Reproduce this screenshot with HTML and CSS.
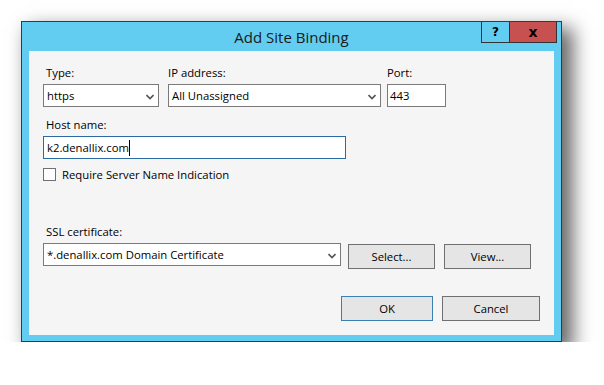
FILE: index.html
```html
<!DOCTYPE html>
<html>
<head>
<meta charset="utf-8">
<link rel="stylesheet" href="styles.css">
</head>
<body>
<div class="window">
  <div class="titlebar">
    <div class="title">Add Site Binding</div>
    <div class="caption-buttons">
      <div class="cap-btn help">?</div>
      <div class="cap-btn close">x</div>
    </div>
  </div>
  <div class="content">
    <div class="row row-top">
      <div class="field f-type">
        <div class="label indent">Type:</div>
        <div class="box select"><span class="val">https</span>
          <svg class="chev" width="8" height="6" viewBox="0 0 8 6"><polyline points="0.5,1 4,4.5 7.5,1" fill="none" stroke="#555" stroke-width="1.6"/></svg>
        </div>
      </div>
      <div class="field f-ip">
        <div class="label">IP address:</div>
        <div class="box select"><span class="val">All Unassigned</span>
          <svg class="chev" width="8" height="6" viewBox="0 0 8 6"><polyline points="0.5,1 4,4.5 7.5,1" fill="none" stroke="#555" stroke-width="1.6"/></svg>
        </div>
      </div>
      <div class="field f-port">
        <div class="label">Port:</div>
        <div class="box"><span class="val">443</span></div>
      </div>
    </div>
    <div class="field f-host">
      <div class="label indent">Host name:</div>
      <div class="box focus"><span class="val caret">k2.denallix.com</span></div>
    </div>
    <div class="check-row">
      <div class="checkbox"></div>
      <span class="check-label">Require Server Name Indication</span>
    </div>
    <div class="field f-ssl">
      <div class="label indent">SSL certificate:</div>
      <div class="ssl-row">
        <div class="box select ssl-select"><span class="val">*.denallix.com Domain Certificate</span>
          <svg class="chev" width="8" height="6" viewBox="0 0 8 6"><polyline points="0.5,1 4,4.5 7.5,1" fill="none" stroke="#555" stroke-width="1.6"/></svg>
        </div>
        <div class="btn btn-select">Select...</div>
        <div class="btn btn-view">View...</div>
      </div>
    </div>
    <div class="footer">
      <div class="btn btn-ok default">OK</div>
      <div class="btn btn-cancel">Cancel</div>
    </div>
  </div>
</div>
</body>
</html>
```

FILE: styles.css
```css
html, body {
  margin: 0;
  padding: 0;
  background: #ffffff;
}
body {
  font-family: "Open Sans", "Noto Sans", sans-serif;
  font-size: 11.3px;
  color: #000;
}
.window {
  margin: 21px 0 0 21px;
  width: 539px;
  border: 1px solid #3a3a3a;
  background: #62cdf0;
  padding: 0 0 6px 0;
  box-shadow: 9px 9px 18px 2px rgba(0, 0, 0, 0.6);
}
.titlebar {
  position: relative;
  height: 29px;
  display: flex;
  align-items: center;
  justify-content: center;
}
.title {
  font-size: 15px;
  color: #1a1a1a;
  margin-top: 1px;
}
.caption-buttons {
  position: absolute;
  top: 0;
  right: 4px;
  display: flex;
}
.cap-btn {
  height: 20px;
  border: 1px solid #333;
  border-top: none;
  display: flex;
  align-items: center;
  justify-content: center;
  font-family: "DejaVu Sans", sans-serif;
  font-weight: bold;
  color: #000;
}
.help {
  width: 27px;
  border-right: none;
  font-size: 12px;
  background: #62cdf0;
}
.close {
  width: 46px;
  background: #c75050;
  font-size: 14px;
  line-height: 14px;
}
.content {
  margin: 0 7px;
  height: 284px;
  background: #f5f5f5;
  box-sizing: border-box;
  padding: 14px 14px 14px 14px;
  display: flex;
  flex-direction: column;
}
.row-top {
  display: flex;
}
.label {
  height: 16px;
  line-height: 16px;
  margin-bottom: 3px;
  white-space: nowrap;
}
.indent {
  padding-left: 3px;
}
.box {
  height: 23px;
  box-sizing: border-box;
  border: 1px solid #7a7a7a;
  background: #fff;
  display: flex;
  align-items: center;
  padding-left: 3px;
  position: relative;
}
.select .chev {
  position: absolute;
  right: 4px;
  top: 9px;
}
.val {
  white-space: nowrap;
}
.f-type { width: 116px; margin-right: 9px; }
.f-ip { width: 213px; margin-right: 6px; }
.f-port { width: 59px; }
.f-port .box { padding-left: 2px; }
.f-host {
  margin-top: 10px;
  width: 303px;
}
.focus {
  border-color: #2b6aa3;
}
.caret {
  border-right: 1px solid #000;
  padding-right: 0;
  line-height: 16px;
}
.check-row {
  margin-top: 9px;
  display: flex;
  align-items: center;
  height: 13px;
}
.checkbox {
  width: 13px;
  height: 13px;
  box-sizing: border-box;
  border: 1px solid #707070;
  background: #fff;
  margin-right: 6px;
}
.f-ssl {
  margin-top: 43px;
}
.ssl-row {
  display: flex;
  align-items: flex-start;
}
.ssl-select {
  width: 298px;
  margin-right: 7px;
}
.btn {
  height: 25px;
  box-sizing: border-box;
  border: 1px solid #707070;
  background: #e5e5e5;
  display: flex;
  align-items: center;
  justify-content: center;
}
.btn-select { width: 87px; margin-top: 1px; margin-right: 9px; }
.btn-view { width: 87px; margin-top: 1px; }
.footer {
  margin-top: auto;
  display: flex;
  justify-content: flex-end;
}
.btn-ok { width: 92px; margin-right: 9px; }
.btn-cancel { width: 98px; }
.default {
  border-color: #3c7fb1;
}
```
